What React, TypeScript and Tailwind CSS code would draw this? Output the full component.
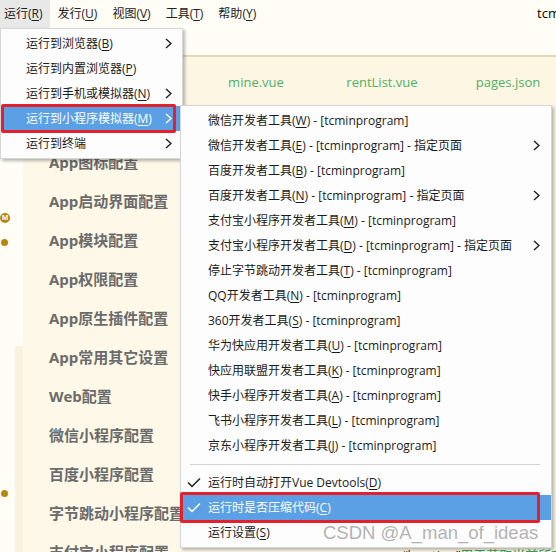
const UI = "font-['Open_Sans','Noto_Sans_CJK_SC',sans-serif]"

type Entry = { pre: string; key?: string; post?: string; sub?: boolean; check?: boolean; active?: boolean }

const runMenu: Entry[] = [
  { pre: "运行到浏览器", key: "B", sub: true },
  { pre: "运行到内置浏览器", key: "P" },
  { pre: "运行到手机或模拟器", key: "N", sub: true },
  { pre: "运行到小程序模拟器", key: "M", sub: true, active: true },
  { pre: "运行到终端", sub: true },
]

const T = " - [tcminprogram]"
const P = " - [tcminprogram] - 指定页面"

const miniMenu: Entry[] = [
  { pre: "微信开发者工具", key: "W", post: T },
  { pre: "微信开发者工具", key: "E", post: P, sub: true },
  { pre: "百度开发者工具", key: "B", post: T },
  { pre: "百度开发者工具", key: "N", post: P, sub: true },
  { pre: "支付宝小程序开发者工具", key: "M", post: T },
  { pre: "支付宝小程序开发者工具", key: "D", post: P, sub: true },
  { pre: "停止字节跳动开发者工具", key: "T", post: T },
  { pre: "QQ开发者工具", key: "N", post: T },
  { pre: "360开发者工具", key: "S", post: T },
  { pre: "华为快应用开发者工具", key: "U", post: T },
  { pre: "快应用联盟开发者工具", key: "K", post: T },
  { pre: "快手小程序开发者工具", key: "A", post: T },
  { pre: "飞书小程序开发者工具", key: "L", post: T },
  { pre: "京东小程序开发者工具", key: "J", post: T },
]

const optMenu: Entry[] = [
  { pre: "运行时自动打开Vue Devtools", key: "D", check: true },
  { pre: "运行时是否压缩代码", key: "C", check: true, active: true },
  { pre: "运行设置", key: "S" },
]

const labels = [
  "App图标配置",
  "App启动界面配置",
  "App模块配置",
  "App权限配置",
  "App原生插件配置",
  "App常用其它设置",
  "Web配置",
  "微信小程序配置",
  "百度小程序配置",
  "字节跳动小程序配置",
  "支付宝小程序配置",
]

function Label({ e }: { e: Entry }) {
  return (
    <span className="whitespace-nowrap">
      {e.pre}
      {e.key && (
        <>
          (<span className="underline underline-offset-[2px]">{e.key}</span>)
        </>
      )}
      {e.post}
    </span>
  )
}

function Chevron({ white }: { white?: boolean }) {
  return (
    <svg width="7" height="11" viewBox="0 0 7 11" className="shrink-0">
      <polyline points="1,1 6,5.5 1,10" fill="none" stroke={white ? "#fff" : "#1e1e1e"} strokeWidth="1.4" />
    </svg>
  )
}

function Check({ white }: { white?: boolean }) {
  return (
    <svg width="14" height="11" viewBox="0 0 14 11">
      <polyline points="1,5.5 5,9.5 13,1.5" fill="none" stroke={white ? "#fff" : "#1e1e1e"} strokeWidth="1.5" />
    </svg>
  )
}

function RunItem({ e }: { e: Entry }) {
  return (
    <div
      className={`relative h-[25px] flex items-center justify-between pl-[25px] pr-[10px] ${
        e.active ? "bg-[#5b9fe4] text-white" : "text-[#1b1b1b]"
      }`}
    >
      <Label e={e} />
      {e.sub && <Chevron white={e.active} />}
      {e.active && (
        <span className="absolute -top-[2px] -bottom-[2px] left-0 right-[6px] border-[3px] border-[#e4202c] rounded-[2px]" />
      )}
    </div>
  )
}

function SubItem({ e }: { e: Entry }) {
  return (
    <div
      className={`relative h-[25px] flex items-center pr-[11px] ${
        e.active ? "bg-[#5b9fe4] text-white" : "text-[#1b1b1b]"
      }`}
    >
      <div className="w-[27px] pl-[6px] flex items-center shrink-0">{e.check && <Check white={e.active} />}</div>
      <div className="flex-1">
        <Label e={e} />
      </div>
      {e.sub && <Chevron white={e.active} />}
      {e.active && (
        <span className="absolute -top-[3px] -bottom-[3px] -left-[1px] right-[11px] border-[3px] border-[#e4202c] rounded-[2px]" />
      )}
    </div>
  )
}

export default function App() {
  return (
    <div className={`relative w-[556px] h-[552px] overflow-hidden bg-[#fffdf6] ${UI}`}>
      {/* menu bar */}
      <header className="h-[28px] flex items-center gap-[4px] text-[12px] text-[#222]">
        {[
          ["运行", "R"],
          ["发行", "U"],
          ["视图", "V"],
          ["工具", "T"],
          ["帮助", "Y"],
        ].map(([t, k], i) => (
          <div key={k} className={`h-full flex items-center pl-[4px] pr-[7px] ${i === 0 ? "bg-[#e8e8e8]" : ""}`}>
            {t}(<span className="underline underline-offset-[2px]">{k}</span>)
          </div>
        ))}
        <div className="ml-auto text-[13px] text-black translate-x-[4px]">tcm</div>
      </header>

      <div className="h-[27px]" />
      <div className="h-[2px] bg-[#e4d8b6]" />

      {/* editor tabs */}
      <div className="h-[51px] bg-[#fdf6e3] flex items-center pl-[193px] text-[13px] text-[#4fb166]">
        <div className="w-[126px] text-center shrink-0">mine.vue</div>
        <div className="w-[126px] text-center shrink-0">rentList.vue</div>
        <div className="w-[126px] text-center shrink-0">pages.json</div>
      </div>

      {/* body */}
      <div className="flex h-[444px]">
        <div className="w-[23px] shrink-0 flex flex-col bg-[#fffdf6]">
          <div className="mt-[105px] w-[10px] h-[10px] rounded-full bg-[#b8860b] text-white text-[7px] leading-[10px] text-center font-bold">
            M
          </div>
          <div className="mt-[16px] ml-[1px] w-[7px] h-[7px] rounded-full bg-[#b8860b]" />
          <div className="flex-1 flex">
            <div className="flex-1 flex flex-col">
              <div className="mt-[244px] ml-[1px] w-[7px] h-[7px] rounded-full bg-[#b8860b]" />
            </div>
            <div className="w-[8px] mt-[100px] bg-[#f9f2de]" />
          </div>
        </div>
        <div className="w-[1px] bg-[#d9ccaa]" />
        <div className="w-[170px] shrink-0 bg-[#fdf8e8] pt-[35px] pl-[26px]">
          {labels.map((l) => (
            <div key={l} className="h-[39px] flex items-center text-[15px] font-bold text-[#6b6b6b] whitespace-nowrap">
              {l}
            </div>
          ))}
        </div>
        <div className="flex-1 bg-[#fdf8e8] pt-[438px] pl-[210px] text-[13px] whitespace-nowrap">
          <span className="text-[#333]">“location”</span>
          <span className="text-[#3aa757]">用于获取当前所在城市</span>
        </div>
      </div>

      {/* 运行 menu */}
      <div className="absolute left-0 top-[28px] w-[183px] py-[2px] bg-[#fdfdfd] border border-[#d6d6d6] text-[12px] shadow-[2px_2px_3px_rgba(0,0,0,0.28)]">
        {runMenu.map((e) => (
          <RunItem key={e.pre} e={e} />
        ))}
      </div>

      {/* 小程序模拟器 submenu */}
      <div className="absolute left-[180px] top-[105px] w-[372px] py-[2px] bg-[#fdfdfd] border border-[#d6d6d6] text-[12px] shadow-[2px_2px_3px_rgba(0,0,0,0.28)]">
        {miniMenu.map((e, i) => (
          <SubItem key={i} e={e} />
        ))}
        <div className="h-[12px] flex items-center ml-[9px] mr-[11px]">
          <div className="h-[1px] w-full bg-[#d4d4d4]" />
        </div>
        {optMenu.map((e, i) => (
          <SubItem key={i} e={e} />
        ))}
      </div>

      {/* watermark */}
      <div className="absolute left-[323px] top-[520px] text-[18.5px] leading-[26px] text-[#9e9e9e]/80 font-['Liberation_Sans',sans-serif] whitespace-nowrap">
        CSDN @A_man_of_ideas
      </div>
    </div>
  )
}
